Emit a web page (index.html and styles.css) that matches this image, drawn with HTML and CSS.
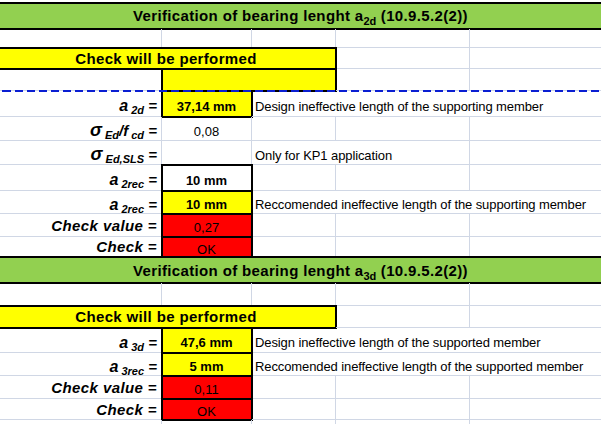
FILE: index.html
```html
<!DOCTYPE html>
<html>
<head>
<meta charset="utf-8">
<title>Verification of bearing lenght</title>
<link rel="stylesheet" href="styles.css">
</head>
<body>
<div class="sheet">
  <div class="grid">
    <!-- title 1 -->
    <div class="c s5 g box hd"><span>Verification of bearing lenght a<span class="tsub">2d</span> (10.9.5.2(2))</span></div>
    <!-- empty -->
    <div class="c"></div><div class="c"></div><div class="c"></div><div class="c"></div><div class="c"></div>
    <!-- check will be performed -->
    <div class="c s3 y box hd"><span>Check will be performed</span></div><div class="c"></div><div class="c"></div>
    <!-- yellow merged -->
    <div class="c"></div><div class="c s2 y box"></div><div class="c"></div><div class="c"></div>
    <!-- a2d -->
    <div class="c lbl sb"><span><span class="m">a</span><sub> 2d</sub> =</span></div>
    <div class="c y box val b"><span>37,14 mm</span></div>
    <div class="c s3 desc"><span>Design ineffective length of the supporting member</span></div>
    <!-- sigma / f -->
    <div class="c lbl sb"><span><span class="sym">σ</span><sub> Ed</sub>/f<sub> cd</sub> =</span></div>
    <div class="c val"><span>0,08</span></div><div class="c"></div><div class="c"></div><div class="c"></div>
    <!-- sigma SLS -->
    <div class="c lbl sb"><span><span class="sym">σ</span><sub> Ed,SLS</sub> =</span></div>
    <div class="c"></div>
    <div class="c s2 desc"><span>Only for KP1 application</span></div><div class="c"></div>
    <!-- a2rec -->
    <div class="c lbl sb"><span><span class="m">a</span><sub> 2rec</sub> =</span></div>
    <div class="c box val b"><span>10 mm</span></div><div class="c"></div><div class="c"></div><div class="c"></div>
    <!-- a2rec yellow -->
    <div class="c lbl sb"><span><span class="m">a</span><sub> 2rec</sub> =</span></div>
    <div class="c y box val b"><span>10 mm</span></div>
    <div class="c s3 desc"><span>Reccomended ineffective length of the supporting member</span></div>
    <!-- check value -->
    <div class="c lbl"><span>Check value =</span></div>
    <div class="c r box val"><span>0,27</span></div><div class="c"></div><div class="c"></div><div class="c"></div>
    <!-- check -->
    <div class="c lbl"><span>Check =</span></div>
    <div class="c r box val"><span>OK</span></div><div class="c"></div><div class="c"></div><div class="c"></div>
    <!-- title 2 -->
    <div class="c s5 g box hd title2"><span>Verification of bearing lenght a<span class="tsub">3d</span> (10.9.5.2(2))</span></div>
    <!-- empty -->
    <div class="c"></div><div class="c"></div><div class="c"></div><div class="c"></div><div class="c"></div>
    <!-- check will be performed -->
    <div class="c s3 y box hd"><span>Check will be performed</span></div><div class="c"></div><div class="c"></div>
    <!-- a3d -->
    <div class="c lbl sb"><span><span class="m">a</span><sub> 3d</sub> =</span></div>
    <div class="c y box val b"><span>47,6 mm</span></div>
    <div class="c s3 desc"><span>Design ineffective length of the supported member</span></div>
    <!-- a3rec -->
    <div class="c lbl sb"><span><span class="m">a</span><sub> 3rec</sub> =</span></div>
    <div class="c y box val b"><span>5 mm</span></div>
    <div class="c s3 desc"><span>Reccomended ineffective length of the supported member</span></div>
    <!-- check value -->
    <div class="c lbl"><span>Check value =</span></div>
    <div class="c r box val"><span>0,11</span></div><div class="c"></div><div class="c"></div><div class="c"></div>
    <!-- check -->
    <div class="c lbl"><span>Check =</span></div>
    <div class="c r box val"><span>OK</span></div><div class="c"></div><div class="c"></div><div class="c"></div>
    <!-- tail -->
    <div class="c"></div><div class="c"></div><div class="c"></div><div class="c"></div><div class="c"></div>
  </div>
  <div class="pagebreak"></div>
</div>
</body>
</html>
```

FILE: styles.css
```css
* {
  box-sizing: border-box;
  margin: 0;
  padding: 0;
}

html,
body {
  background: #ffffff;
  overflow: hidden;
}

body {
  width: 601px;
  height: 424px;
  font-family: "Liberation Sans", Arial, sans-serif;
  color: #000000;
}

.sheet {
  position: relative;
  width: 601px;
  height: 424px;
  overflow: hidden;
  padding-top: 3px;
}

.grid {
  display: grid;
  margin-left: -3px;
  grid-template-columns: 165px 90px 84px 134px 135px;
  grid-template-rows: 26px 19px 21px 22px 26px 24px 24px 26px 23px 23px 20px 26px 23px 22px 25px 23px 23px 21px 21px;
  width: 628px;
}

.c {
  display: flex;
  align-items: center;
  min-width: 0;
  white-space: nowrap;
  font-size: 13px;
  border-right: 1px solid #d0d7e5;
  border-bottom: 1px solid #d0d7e5;
}

.s2 { grid-column: span 2; }
.s3 { grid-column: span 3; }
.s5 { grid-column: span 5; }

.g { background: #92d050; }
.y { background: #ffff00; }
.r { background: #ff0000; }

.box {
  outline: 2px solid #000000;
  outline-offset: -1px;
}

.hd {
  justify-content: center;
  font-size: 15px;
  font-weight: bold;
  letter-spacing: 0.35px;
}

.title2 {
  padding-top: 2px;
}

.tsub {
  font-size: 11px;
  letter-spacing: 0;
  vertical-align: -4px;
  line-height: 0;
}

.val {
  justify-content: center;
  padding-top: 5px;
}

.b { font-weight: bold; }

.desc {
  padding-left: 3px;
  padding-top: 5px;
  letter-spacing: -0.1px;
}

.lbl {
  justify-content: flex-end;
  padding-right: 4px;
  font-size: 15px;
  font-weight: bold;
  font-style: italic;
  letter-spacing: 0.4px;
}

.lbl.sb {
  padding-top: 4px;
  letter-spacing: 0;
}

.lbl .m {
  font-size: 16px;
  line-height: 0;
}

.lbl .sym {
  font-size: 18px;
  line-height: 0;
}

.lbl sub {
  font-size: 11px;
  letter-spacing: 0;
  vertical-align: -3px;
  line-height: 0;
}

.pagebreak {
  position: absolute;
  left: 0;
  right: 0;
  top: 90px;
  height: 2px;
  z-index: 1;
  background: repeating-linear-gradient(to right, #0a1ed2 0, #0a1ed2 8px, transparent 8px, transparent 12px);
  background-position: 3px 0;
}
```
